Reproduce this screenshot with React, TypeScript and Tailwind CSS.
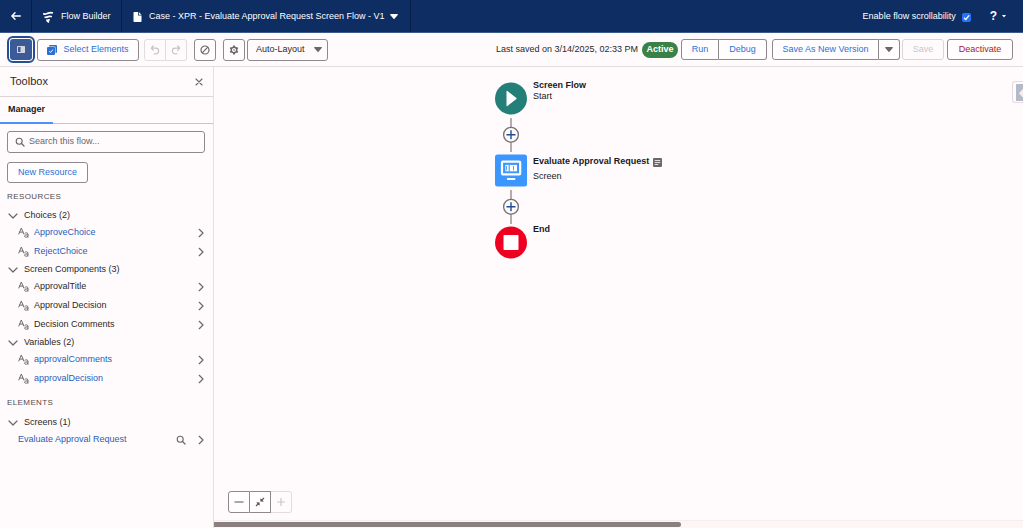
import React, { useState } from "react";

type IconProps = { className?: string };

const Caret = ({ className = "" }: IconProps) => (
  <svg className={className} viewBox="0 0 8 5" width="8" height="5" fill="currentColor" aria-hidden="true">
    <path d="M.8 0h6.4c.6 0 .8.5.5.9L4.5 4.7c-.3.3-.7.3-1 0L.3.9C0 .5.2 0 .8 0z" />
  </svg>
);

const ChevronRight = () => (
  <svg viewBox="0 0 8 10" width="8" height="10" fill="none" stroke="#6b6669" strokeWidth="1.2" strokeLinecap="round" strokeLinejoin="round" aria-hidden="true">
    <path d="M2.2 1.3 6 5 2.2 8.7" />
  </svg>
);

const ChevronDown = () => (
  <svg viewBox="0 0 10 8" width="10" height="8" fill="none" stroke="#6b6669" strokeWidth="1.2" strokeLinecap="round" strokeLinejoin="round" aria-hidden="true">
    <path d="M1 2 5 6 9 2" />
  </svg>
);

const SearchIcon = () => (
  <svg viewBox="0 0 10 10" width="10" height="10" fill="none" stroke="#6b6669" strokeWidth="1.1" strokeLinecap="round" aria-hidden="true">
    <circle cx="4.2" cy="4.2" r="3" />
    <path d="M6.5 6.5 9 9" strokeWidth="1.3" />
  </svg>
);

const TextIcon = () => (
  <svg viewBox="0 0 11 11" width="11" height="11" fill="none" stroke="#6f6a6e" strokeWidth="1" strokeLinecap="round" strokeLinejoin="round" aria-hidden="true">
    <path d="M.8 7 3.3 1l2.500 6M1.600 5.100h3.400" />
    <path d="M6.900 6.300c.9-.8 3-.8 3 .9v3.100M9.900 7.900c-1.500-.1-3.300 0-3.300 1.300 0 1.500 2.500 1.300 3.300.1" />
  </svg>
);

const FlowIcon = () => (
  <svg viewBox="0 0 12 12" width="12" height="12" fill="none" stroke="white" strokeLinecap="round" strokeLinejoin="round" aria-hidden="true">
    <path strokeWidth="1.7" d="M1.800 2.900c1.700.7 2.900-.3 4.300-.8 1.300-.4 2.600-.5 4.200-.3" />
    <path strokeWidth="1.700" d="M3.200 6.200c1.300.4 2-.2 3.100-.6 1-.3 1.900-.3 2.900-.1" />
    <path strokeWidth="1.700" d="M4.900 9.200c.8.200 1.100-.2 2.200-.3M5 9.300c.2.800.7 1.300 1.400 1.600" />
  </svg>
);

const outline = "flex items-center justify-center border border-[#8f898d] bg-white/60";

function Toolbar() {
  return (
    <div className="flex h-[34px] shrink-0 items-center border-b border-[#e3dcdf] pr-[10px] pl-2 text-[9px]">
      <button aria-label="Toggle Toolbox" className="mr-[5px] ml-[2px] flex h-[21px] w-[22px] items-center justify-center rounded-[3px] bg-[#3b5a98] outline-2 outline-offset-1 outline-[#244f94]">
        <svg viewBox="0 0 8 7" width="8" height="7" aria-hidden="true">
          <rect width="8" height="7" rx=".5" fill="#d3d4dc" />
          <rect x="1" y="1" width="2.500" height="5" fill="#3b5a98" />
        </svg>
      </button>
      <button className={`${outline} h-[22px] w-[102px] gap-[6px] rounded-[3px] text-[#2b70d6]`}>
        <svg viewBox="0 0 10 10" width="10" height="10" aria-hidden="true">
          <path d="M3 0h6q1 0 1 1v6q0 1-1 1H3Q2 8 2 7V1q0-1 1-1z" fill="currentColor" />
          <rect x="-.5" y="1.500" width="9" height="9" rx="1.200" fill="white" />
          <rect x="0" y="2" width="8" height="8" rx="1" fill="currentColor" />
          <path d="m2.200 6 1.400 1.500 2.400-3" fill="none" stroke="white" strokeWidth=".9" />
        </svg>
        Select Elements
      </button>
      <div className="ml-[5px] flex text-[#c9c3c6]">
        <button aria-label="Undo" disabled className="flex h-[22px] w-[22px] items-center justify-center rounded-l-[3px] border border-[#e3dcdf]">
          <svg viewBox="0 0 10 10" width="10" height="10" fill="none" stroke="currentColor" strokeWidth="1.200" strokeLinecap="round" strokeLinejoin="round" aria-hidden="true">
            <path d="M3.300 1 1.200 3.200l2.100 2.200M1.400 3.200h4.200c4 0 4 5.600.3 5.600H4.200" />
          </svg>
        </button>
        <button aria-label="Redo" disabled className="flex h-[22px] w-[21px] items-center justify-center rounded-r-[3px] border border-l-0 border-[#e3dcdf]">
          <svg viewBox="0 0 10 10" width="10" height="10" fill="none" stroke="currentColor" strokeWidth="1.200" strokeLinecap="round" strokeLinejoin="round" aria-hidden="true">
            <path d="m6.700 1 2.100 2.200-2.100 2.200M8.600 3.200H4.400c-4 0-4 5.600-.3 5.600h1.700" />
          </svg>
        </button>
      </div>
      <button aria-label="Hide errors" className={`${outline} ml-[7px] h-[22px] w-[22px] rounded-[3px]`}>
        <svg viewBox="0 0 10 10" width="10" height="10" fill="none" stroke="#6b6669" strokeWidth="1.200" aria-hidden="true">
          <circle cx="5" cy="5" r="4" /><path d="M2.200 7.800 7.800 2.200" />
        </svg>
      </button>
      <button aria-label="Settings" className={`${outline} ml-[7px] h-[22px] w-[22px] rounded-[3px]`}>
        <svg viewBox="0 0 10 10" width="10" height="10" fill="none" stroke="#6b6669" aria-hidden="true">
          <circle cx="5" cy="5" r="2.700" strokeWidth="1.400" />
          <circle cx="5" cy="5" r=".8" fill="#6b6669" stroke="none" />
          <path strokeWidth="1.900" d="M5 .6v1.600M5 7.800v1.600M1.200 2.800l1.400.8M7.400 6.400l1.400.8M8.800 2.800l-1.400.8M2.600 6.400l-1.400.8" />
        </svg>
      </button>
      <div className="relative ml-[2px] text-[#2b282a]">
        <select aria-label="Layout" className="h-[22px] w-[81px] appearance-none rounded-[3px] border border-[#8f898d] bg-transparent pl-2 text-[9px]">
          <option>Auto-Layout</option>
        </select>
        <Caret className="pointer-events-none absolute top-2 right-[6px] text-[#6b6669]" />
      </div>
      <span className="ml-auto whitespace-nowrap text-[#2b282a]">Last saved on 3/14/2025, 02:33 PM</span>
      <span className="ml-1 flex h-4 w-9 items-center justify-center rounded-full bg-[#3a8148] font-bold text-white">Active</span>
      <div className="ml-[3px] flex text-[#2b70d6]">
        <button className={`${outline} h-[21px] w-[38px] rounded-l-[3px]`}>Run</button>
        <button className={`${outline} h-[21px] w-[48px] rounded-r-[3px] border-l-0`}>Debug</button>
      </div>
      <div className="ml-[5px] flex text-[#2b70d6]">
        <button className={`${outline} h-[21px] w-[107px] rounded-l-[3px] whitespace-nowrap`}>Save As New Version</button>
        <button aria-label="More save options" className={`${outline} h-[21px] w-[21px] rounded-r-[3px] border-l-0 text-[#6b6669]`}><Caret /></button>
      </div>
      <button disabled className="ml-[2px] h-[21px] w-[42px] rounded-[3px] border border-[#dcd5d8] text-[#cbc5c8]">Save</button>
      <button className={`${outline} ml-[3px] h-[21px] w-[66px] rounded-[3px] text-[#a8192b]`}>Deactivate</button>
    </div>
  );
}

type Item = { label: string; link?: boolean };
const groups: { title: string; items: Item[] }[] = [
  { title: "Choices (2)", items: [{ label: "ApproveChoice", link: true }, { label: "RejectChoice", link: true }] },
  { title: "Screen Components (3)", items: [{ label: "ApprovalTitle" }, { label: "Approval Decision" }, { label: "Decision Comments" }] },
  { title: "Variables (2)", items: [{ label: "approvalComments", link: true }, { label: "approvalDecision", link: true }] },
];

function GroupTitle({ children }: { children: React.ReactNode }) {
  return (
    <button className="flex h-4 items-center gap-[6px] pt-px pl-2 text-[#2b282a]">
      <ChevronDown />
      {children}
    </button>
  );
}

function Sidebar() {
  return (
    <aside className="flex w-[214px] shrink-0 flex-col border-r border-[#ecdcdf] text-[9px]">
      <div className="flex h-[30px] items-center justify-between border-b border-[#dbd5d8] pr-[10px] pl-[10px]">
        <h2 className="text-[11px] text-[#2b282a]">Toolbox</h2>
        <button aria-label="Close toolbox">
          <svg viewBox="0 0 8 8" width="8" height="8" stroke="#6b6669" strokeWidth="1.100" strokeLinecap="round" aria-hidden="true">
            <path d="m1 1 6 6M7 1 1 7" />
          </svg>
        </button>
      </div>
      <div className="flex h-[27px] border-b border-[#cbc5c8]">
        <button className="-mb-px w-[53px] border-b-2 border-[#4a92f8] text-center font-bold text-[#1c191b]">Manager</button>
      </div>
      <div className="flex flex-col items-start px-[7px] pt-[7px]">
        <label className="flex h-[22px] w-full max-w-[198px] items-center gap-1 rounded-[3px] border border-[#8f898d] pl-[7px]">
          <SearchIcon />
          <input aria-label="Search this flow" placeholder="Search this flow..." className="min-w-0 flex-1 bg-transparent outline-none placeholder:text-[#6b6669]" />
        </label>
        <button className={`${outline} mt-[9px] h-[21px] w-[81px] rounded-[3px] text-[#2b70d6]`}>New Resource</button>
        <h3 className="mt-2 text-[8px] leading-[12px] tracking-wider text-[#4f4a4d]">RESOURCES</h3>
      </div>
      <div className="flex flex-col pt-1">
        {groups.map((group) => (
          <section key={group.title} className="flex flex-col">
            <GroupTitle>{group.title}</GroupTitle>
            <ul>
              {group.items.map((item) => (
                <li key={item.label} className="flex h-[19px] items-center pr-2 pl-[18px]">
                  <TextIcon />
                  {item.link ? (
                    <a href="#" className="ml-[5px] text-[#2a5db8]">{item.label}</a>
                  ) : (
                    <span className="ml-[5px] text-[#2b282a]">{item.label}</span>
                  )}
                  <button aria-label={`Open ${item.label}`} className="ml-auto"><ChevronRight /></button>
                </li>
              ))}
            </ul>
          </section>
        ))}
      </div>
      <h3 className="mt-[9px] pl-[7px] text-[8px] leading-[12px] tracking-wider text-[#4f4a4d]">ELEMENTS</h3>
      <div className="flex flex-col pt-[5px]">
        <GroupTitle>Screens (1)</GroupTitle>
        <div className="flex h-[19px] items-center pr-2 pl-[18px]">
          <a href="#" className="text-[#2a5db8]">Evaluate Approval Request</a>
          <button aria-label="Find on canvas" className="mr-[11px] ml-auto"><SearchIcon /></button>
          <button aria-label="Open Evaluate Approval Request"><ChevronRight /></button>
        </div>
      </div>
    </aside>
  );
}

function Connector() {
  return (
    <button aria-label="Add element" className="block">
      <svg viewBox="0 0 32 34" width="32" height="34" aria-hidden="true">
        <path d="M16 0v34" stroke="#8a8381" strokeWidth="1.300" />
        <circle cx="16" cy="16.800" r="7.400" fill="#fffbfc" stroke="#77716f" strokeWidth="1.300" />
        <path d="M11.500 16.800h9M16 12.300v9" stroke="#1f4b94" strokeWidth="1.400" />
      </svg>
    </button>
  );
}

function Canvas() {
  return (
    <main className="relative flex min-w-0 flex-1 flex-col overflow-hidden text-[9px] text-[#1c191b]">
      <div className="absolute top-[15px] left-[281px]">
        <svg viewBox="0 0 32 32" width="32" height="33" aria-hidden="true">
          <circle cx="16" cy="16" r="16" fill="#237f77" />
          <path d="M11.500 8.800v14.400c0 .5.5.7.9.4l9-7.200c.3-.2.3-.6 0-.8l-9-7.200c-.4-.3-.9-.1-.9.4z" fill="white" />
        </svg>
      </div>
      <div className="absolute top-[13px] left-[319px] leading-[11px]">
        <div className="font-bold">Screen Flow</div>
        <div>Start</div>
      </div>
      <div className="absolute top-[51px] left-[281px]"><Connector /></div>
      <div className="absolute top-[87px] left-[281px]">
        <svg viewBox="0 0 32 32" width="32" height="33" fill="none" aria-hidden="true">
          <rect width="32" height="32" rx="2.500" fill="#3b96ff" />
          <rect x="7" y="7.200" width="18.200" height="12.600" rx=".8" stroke="white" strokeWidth="2.200" />
          <rect x="10.400" y="10.400" width="11.600" height="6.400" fill="white" />
          <path d="M14.200 10.400v6.400" stroke="#3b96ff" strokeWidth="1.100" />
          <path d="M11.600 11.400v4.400M18.500 11.400v4.400" stroke="#3b96ff" strokeWidth=".9" />
          <path d="M12.800 24.600h6.600" stroke="white" strokeWidth="2" strokeLinecap="round" />
        </svg>
      </div>
      <div className="absolute top-[88px] left-[319px]">
        <div className="flex h-[14px] items-center gap-1 font-bold whitespace-nowrap">
          Evaluate Approval Request
          <svg viewBox="0 0 9 9" width="9" height="9" aria-hidden="true">
            <rect width="9" height="9" rx="1" fill="#6b6669" />
            <path d="M1.700 2.500h5.600M1.700 4.500h5.600M1.700 6.500h3.600" stroke="white" strokeWidth=".8" />
          </svg>
        </div>
        <div className="leading-[14px]">Screen</div>
      </div>
      <div className="absolute top-[123px] left-[281px]"><Connector /></div>
      <div className="absolute top-[159px] left-[281px]">
        <svg viewBox="0 0 32 32" width="32" height="33" aria-hidden="true">
          <circle cx="16" cy="16" r="16" fill="#ef0020" />
          <rect x="8.500" y="8.500" width="15" height="15" rx=".7" fill="white" />
        </svg>
      </div>
      <div className="absolute top-[157px] left-[319px] leading-[11px] font-bold">End</div>

      <button aria-label="Open side panel" className="absolute top-[14px] right-0 flex h-[22px] w-[11px] items-center justify-end rounded-l-[3px] border border-r-0 border-[#ead9df]">
        <svg viewBox="0 0 7 17" width="7" height="17" aria-hidden="true">
          <rect width="7" height="17" fill="#b3bac8" />
          <path d="M7 5v8.500L2.800 9.200z" fill="#fbe9f0" />
        </svg>
      </button>

      <div className="mt-auto mb-[7px] ml-[14px] flex">
        <button aria-label="Zoom out" className={`${outline} h-[22px] w-[22px] rounded-l-[3px]`}>
          <svg viewBox="0 0 10 10" width="10" height="10" stroke="#77716f" strokeWidth="1.200" aria-hidden="true"><path d="M.5 5h9" /></svg>
        </button>
        <button aria-label="Zoom to fit" className={`${outline} h-[22px] w-[21px] border-l-0`}>
          <svg viewBox="0 0 10 10" width="10" height="10" fill="#5c5759" stroke="#5c5759" aria-hidden="true">
            <path d="M5.700 1.700v2.600h2.600zM4.300 8.300V5.700H1.700z" strokeWidth=".6" />
            <path d="M6.500 3.500 9 1M3.500 6.500 1 9" strokeWidth="1.200" />
          </svg>
        </button>
        <button aria-label="Zoom in" disabled className="flex h-[22px] w-[21px] items-center justify-center rounded-r-[3px] border border-l-0 border-[#e3dcdf]">
          <svg viewBox="0 0 10 10" width="10" height="10" stroke="#cbc5c8" strokeWidth="1.200" aria-hidden="true"><path d="M1 5h8M5 1v8" /></svg>
        </button>
      </div>
      <div className="h-2 shrink-0 border-t border-[#f3eeef] bg-[#fff5f5] pt-px">
        <div className="h-[5px] w-[57.7%] rounded-r-full bg-[#8a8080]" />
      </div>
    </main>
  );
}

export default function App() {
  const [scrollable, setScrollable] = useState(true);
  return (
    <div className="flex h-screen flex-col overflow-hidden bg-[#fffbfc] font-['Liberation_Sans',Arial,sans-serif]">
      <header className="flex h-[33px] shrink-0 items-stretch border-b border-[#3b5a8c] bg-[#0e2d62] text-[9px] text-white">
        <a href="#" aria-label="Back" className="flex w-8 items-center justify-center border-r border-[#071d48]">
          <svg viewBox="0 0 10 8" width="10" height="8" fill="none" stroke="white" strokeWidth="1.400" strokeLinecap="round" strokeLinejoin="round" aria-hidden="true">
            <path d="M4 .8.9 4 4 7.200M1 4h8.300" />
          </svg>
        </a>
        <div className="flex w-[90px] items-center gap-[7px] border-r border-[#071d48] pt-px pl-[10px] whitespace-nowrap">
          <FlowIcon />
          Flow Builder
        </div>
        <button className="flex w-[289px] items-center border-r border-[#071d48] pt-px pl-[11px] whitespace-nowrap">
          <svg viewBox="0 0 8 10" width="9" height="10" fill="white" aria-hidden="true">
            <path d="M.8 0h3.700v3q0 .6.6.6H8v5.600q0 .8-.8.8H.8Q0 10 0 9.200V.8Q0 0 .8 0zM5.300 0 8 2.800H5.300z" />
          </svg>
          <span className="ml-[7px]">Case - XPR - Evaluate Approval Request Screen Flow - V1</span>
          <Caret className="ml-[5px]" />
        </button>
        <label className="ml-auto flex items-center gap-[6px] pt-px whitespace-nowrap">
          Enable flow scrollability
          <span className="relative mt-[2px] flex h-[9px] w-[9px]">
            <input type="checkbox" checked={scrollable} onChange={(e) => setScrollable(e.target.checked)} className="peer h-[9px] w-[9px] appearance-none rounded-[2px] bg-white checked:bg-[#2674f5]" />
            <svg viewBox="0 0 9 9" className="pointer-events-none absolute inset-0 hidden peer-checked:block" fill="none" stroke="white" strokeWidth="1.300" aria-hidden="true">
              <path d="m2 4.700 1.800 1.900L7 2.300" />
            </svg>
          </span>
        </label>
        <button aria-label="Help" className="mr-[17px] ml-[19px] flex items-center gap-[5px] text-[12px] font-bold">
          ?
          <svg viewBox="0 0 4 3" width="4" height="3" fill="white" aria-hidden="true"><path d="M0 0h4L2 2.500z" /></svg>
        </button>
      </header>
      <Toolbar />
      <div className="flex min-h-0 flex-1">
        <Sidebar />
        <Canvas />
      </div>
    </div>
  );
}
